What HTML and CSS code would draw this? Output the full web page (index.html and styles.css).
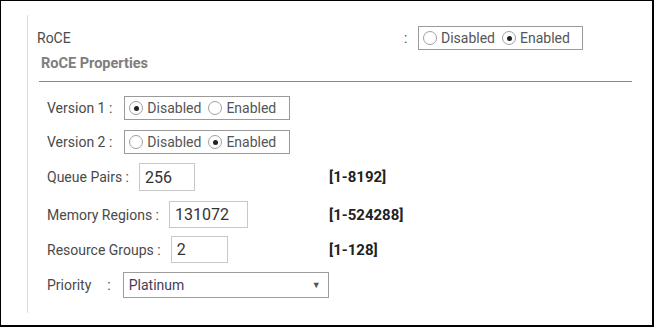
FILE: index.html
```html
<!DOCTYPE html>
<html>
<head>
<meta charset="utf-8">
<link rel="stylesheet" href="styles.css">
</head>
<body>
<div class="frame">
  <div class="panel">
    <div class="top-row">
      <span class="top-label">RoCE</span>
      <span class="colon">:</span>
      <div class="radio-box">
        <span class="radio"></span><span class="opt">Disabled</span>
        <span class="radio checked"></span><span class="opt">Enabled</span>
      </div>
    </div>
    <div class="heading">RoCE Properties</div>
    <div class="rule"></div>
    <div class="fields">
      <div class="row r-v1">
        <div class="field">
          <span class="label v-label">Version 1 :</span>
          <div class="radio-box">
            <span class="radio checked"></span><span class="opt">Disabled</span>
            <span class="radio"></span><span class="opt">Enabled</span>
          </div>
        </div>
      </div>
      <div class="row r-v2">
        <div class="field">
          <span class="label v-label">Version 2 :</span>
          <div class="radio-box">
            <span class="radio"></span><span class="opt">Disabled</span>
            <span class="radio checked"></span><span class="opt">Enabled</span>
          </div>
        </div>
      </div>
      <div class="row r-qp">
        <div class="field">
          <span class="label">Queue Pairs :</span>
          <div class="input w-qp">256</div>
        </div>
        <span class="hint">[1-8192]</span>
      </div>
      <div class="row r-mr">
        <div class="field">
          <span class="label">Memory Regions :</span>
          <div class="input w-mr">131072</div>
        </div>
        <span class="hint">[1-524288]</span>
      </div>
      <div class="row r-rg">
        <div class="field">
          <span class="label">Resource Groups :</span>
          <div class="input w-rg">2</div>
        </div>
        <span class="hint">[1-128]</span>
      </div>
      <div class="row r-pr">
        <div class="field">
          <span class="label pr-label">Priority</span>
          <span class="label pr-colon">:</span>
          <div class="select">
            <span>Platinum</span>
            <span class="arrow">&#9660;</span>
          </div>
        </div>
      </div>
    </div>
  </div>
</div>
</body>
</html>
```
FILE: styles.css
```css
html, body {
  margin: 0;
  padding: 0;
  background: #fff;
}
body {
  font-family: Roboto, "Liberation Sans", sans-serif;
  font-size: 14px;
  color: #4a4a4a;
}
.frame {
  width: 654px;
  height: 327px;
  box-sizing: border-box;
  border-style: solid;
  border-color: #000;
  border-width: 1px 2px 2px 1px;
  overflow: hidden;
}
.panel {
  margin: 14px 0 0 26px;
  height: 298px;
  border-left: 1px solid #dcdcdc;
  padding: 11px 0 0 9px;
  box-sizing: border-box;
}
.top-row {
  display: flex;
  align-items: center;
  height: 24px;
}
.top-label {
  width: 367px;
}
.colon {
  width: 14px;
}
.radio-box {
  display: flex;
  align-items: center;
  height: 24px;
  box-sizing: border-box;
  border: 1px solid #9a9a9a;
  padding: 0;
}
.top-row .radio-box {
  width: 165px;
}
.radio {
  width: 14px;
  height: 14px;
  border: 1px solid #a0a0a0;
  border-radius: 50%;
  box-sizing: border-box;
  display: flex;
  align-items: center;
  justify-content: center;
  margin: 0 4px 0 7px;
}
.radio:first-child {
  margin-left: 4px;
}
.radio.checked::after {
  content: "";
  width: 5px;
  height: 5px;
  border-radius: 50%;
  background: #222;
}
.opt {
  color: #555;
}
.heading {
  margin: 4px 0 0 4px;
  font-weight: bold;
  font-size: 14.5px;
  color: #7e7e7e;
  line-height: 19px;
}
.rule {
  margin: 8px 0 0 2px;
  width: 593px;
  border-top: 1px solid #8a8a8a;
}
.fields {
  padding-left: 10px;
}
.row {
  display: grid;
  grid-template-columns: 282px auto;
  align-items: center;
}
.field {
  display: flex;
  align-items: center;
}
.label {
  margin-right: 10px;
}
.v-label {
  margin-right: 12px;
}
.field .radio-box {
  width: 166px;
}
.r-v1 { margin-top: 14px; }
.r-v2 { margin-top: 10px; }
.r-qp { margin-top: 9px; }
.r-mr { margin-top: 10px; }
.r-rg { margin-top: 8px; }
.r-pr { margin-top: 9px; }
.input {
  box-sizing: border-box;
  border: 1px solid #c8c8c8;
  height: 27px;
  display: flex;
  align-items: center;
  padding-left: 5px;
  font-size: 16px;
  color: #333;
}
.w-qp { width: 56px; height: 28px; }
.w-mr { width: 79px; }
.w-rg { width: 57px; }
.hint {
  font-weight: bold;
  font-size: 15px;
  color: #222;
}
.pr-label {
  margin-right: 16px;
}
.pr-colon {
  margin-right: 12px;
}
.select {
  box-sizing: border-box;
  width: 206px;
  height: 26px;
  border: 1px solid #9c9c9c;
  display: flex;
  align-items: center;
  justify-content: space-between;
  padding: 0 7px 0 5px;
  color: #4a3a55;
}
.arrow {
  font-size: 9px;
  color: #555;
}
```
